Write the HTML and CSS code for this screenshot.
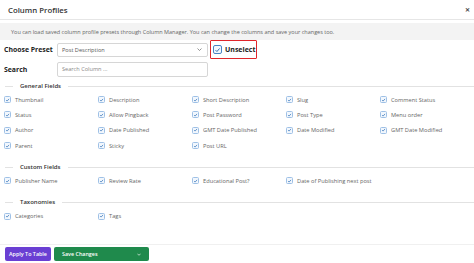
FILE: index.html
```html
<!DOCTYPE html>
<html>
<head>
<meta charset="utf-8">
<link rel="stylesheet" href="styles.css">
</head>
<body>
<div class="modal">
  <div class="header">
    <span class="title">Column Profiles</span>
    <span class="close">✕</span>
  </div>
  <div class="info">You can load saved column profile presets through Column Manager. You can change the columns and save your changes too.</div>
  <div class="row preset-row">
    <span class="label">Choose Preset</span>
    <div class="select"><span>Post Description</span><svg class="chev" viewBox="0 0 10 6" width="5" height="3"><path d="M1 1l4 4 4-4" fill="none" stroke="#666" stroke-width="1.4"/></svg></div>
    <div class="unselect"><span class="cb big"><svg viewBox="0 0 10 10"><path d="M2.2 5.2l2 2 3.8-4.4" fill="none" stroke="#2b6cb0" stroke-width="1.4"/></svg></span><b>Unselect</b></div>
  </div>
  <div class="row search-row">
    <span class="label">Search</span>
    <div class="input">Search Column ...</div>
  </div>

  <div class="divider general-div"><span>General Fields</span></div>
  <div class="grid">
    <label class="item"><span class="cb"><svg viewBox="0 0 10 10"><path d="M2.2 5.2l2 2 3.8-4.4"/></svg></span>Thumbnail</label>
    <label class="item"><span class="cb"><svg viewBox="0 0 10 10"><path d="M2.2 5.2l2 2 3.8-4.4"/></svg></span>Description</label>
    <label class="item"><span class="cb"><svg viewBox="0 0 10 10"><path d="M2.2 5.2l2 2 3.8-4.4"/></svg></span>Short Description</label>
    <label class="item"><span class="cb"><svg viewBox="0 0 10 10"><path d="M2.2 5.2l2 2 3.8-4.4"/></svg></span>Slug</label>
    <label class="item"><span class="cb"><svg viewBox="0 0 10 10"><path d="M2.2 5.2l2 2 3.8-4.4"/></svg></span>Comment Status</label>
    <label class="item"><span class="cb"><svg viewBox="0 0 10 10"><path d="M2.2 5.2l2 2 3.8-4.4"/></svg></span>Status</label>
    <label class="item"><span class="cb"><svg viewBox="0 0 10 10"><path d="M2.2 5.2l2 2 3.8-4.4"/></svg></span>Allow Pingback</label>
    <label class="item"><span class="cb"><svg viewBox="0 0 10 10"><path d="M2.2 5.2l2 2 3.8-4.4"/></svg></span>Post Password</label>
    <label class="item"><span class="cb"><svg viewBox="0 0 10 10"><path d="M2.2 5.2l2 2 3.8-4.4"/></svg></span>Post Type</label>
    <label class="item"><span class="cb"><svg viewBox="0 0 10 10"><path d="M2.2 5.2l2 2 3.8-4.4"/></svg></span>Menu order</label>
    <label class="item"><span class="cb"><svg viewBox="0 0 10 10"><path d="M2.2 5.2l2 2 3.8-4.4"/></svg></span>Author</label>
    <label class="item"><span class="cb"><svg viewBox="0 0 10 10"><path d="M2.2 5.2l2 2 3.8-4.4"/></svg></span>Date Published</label>
    <label class="item"><span class="cb"><svg viewBox="0 0 10 10"><path d="M2.2 5.2l2 2 3.8-4.4"/></svg></span>GMT Date Published</label>
    <label class="item"><span class="cb"><svg viewBox="0 0 10 10"><path d="M2.2 5.2l2 2 3.8-4.4"/></svg></span>Date Modified</label>
    <label class="item"><span class="cb"><svg viewBox="0 0 10 10"><path d="M2.2 5.2l2 2 3.8-4.4"/></svg></span>GMT Date Modified</label>
    <label class="item"><span class="cb"><svg viewBox="0 0 10 10"><path d="M2.2 5.2l2 2 3.8-4.4"/></svg></span>Parent</label>
    <label class="item"><span class="cb"><svg viewBox="0 0 10 10"><path d="M2.2 5.2l2 2 3.8-4.4"/></svg></span>Sticky</label>
    <label class="item"><span class="cb"><svg viewBox="0 0 10 10"><path d="M2.2 5.2l2 2 3.8-4.4"/></svg></span>Post URL</label>
  </div>

  <div class="divider"><span>Custom Fields</span></div>
  <div class="grid">
    <label class="item"><span class="cb"><svg viewBox="0 0 10 10"><path d="M2.2 5.2l2 2 3.8-4.4"/></svg></span>Publisher Name</label>
    <label class="item"><span class="cb"><svg viewBox="0 0 10 10"><path d="M2.2 5.2l2 2 3.8-4.4"/></svg></span>Review Rate</label>
    <label class="item"><span class="cb"><svg viewBox="0 0 10 10"><path d="M2.2 5.2l2 2 3.8-4.4"/></svg></span>Educational Post?</label>
    <label class="item"><span class="cb"><svg viewBox="0 0 10 10"><path d="M2.2 5.2l2 2 3.8-4.4"/></svg></span>Date of Publishing next post</label>
  </div>

  <div class="divider"><span>Taxonomies</span></div>
  <div class="grid">
    <label class="item"><span class="cb"><svg viewBox="0 0 10 10"><path d="M2.2 5.2l2 2 3.8-4.4"/></svg></span>Categories</label>
    <label class="item"><span class="cb"><svg viewBox="0 0 10 10"><path d="M2.2 5.2l2 2 3.8-4.4"/></svg></span>Tags</label>
  </div>

  <div class="footer">
    <button class="btn apply">Apply To Table</button>
    <button class="btn save"><span>Save Changes</span><svg viewBox="0 0 10 6" width="4" height="3"><path d="M1 1l4 4 4-4" fill="none" stroke="#fff" stroke-width="1.6"/></svg></button>
  </div>
</div>
</body>
</html>
```
FILE: styles.css
```css
* { box-sizing: border-box; }
html, body { margin: 0; padding: 0; background: #fff; }
body {
  font-family: "Open Sans", "Noto Sans", sans-serif;
  color: #555;
  width: 474px;
  height: 263px;
  overflow: hidden;
}
.modal { display: flex; flex-direction: column; }
.header {
  height: 20px;
  display: flex;
  align-items: center;
  justify-content: space-between;
  padding: 0 4px 0 8px;
  border-bottom: 1px solid #e6e6e6;
}
.title { font-size: 7.8px; font-weight: 600; color: #333; }
.close { font-size: 6px; color: #444; font-weight: 700; }
.info {
  margin-top: 3px;
  height: 17px;
  background: #f3f3f3;
  padding: 0 11px;
  font-size: 5.5px;
  color: #666;
  display: flex;
  align-items: center;
  white-space: nowrap;
}
.row { display: flex; align-items: center; padding-left: 4px; }
.label { width: 53px; font-size: 6.9px; font-weight: 700; color: #222; }
.preset-row { height: 19px; }
.select, .input {
  width: 151px;
  height: 14px;
  border: 1px solid #d6d6d6;
  border-radius: 2px;
  padding: 0 5px 0 4px;
  font-size: 5.6px;
  display: flex;
  align-items: center;
  justify-content: space-between;
  color: #555;
}
.input { color: #888; height: 15px; }
.chev { display: block; }
.unselect {
  margin-left: 2px;
  height: 19px;
  width: 47px;
  border: 1.5px solid #e0262b;
  border-radius: 1px;
  display: flex;
  align-items: center;
  padding-left: 2px;
  gap: 3px;
}
.unselect b { font-size: 7px; color: #222; font-weight: 700; }
.search-row { height: 18px; margin-top: 1px; }
.divider {
  display: flex;
  align-items: center;
  margin-top: 10px;
  height: 8px;
  font-size: 6px;
  font-weight: 600;
  color: #333;
  padding-left: 5px;
}
.divider.general-div { margin-top: 4px; }
.divider::before { content: ""; width: 8px; height: 1px; background: #e2e2e2; }
.divider span { padding: 0 7px; }
.divider::after { content: ""; flex: 1; height: 1px; background: #e2e2e2; }
.grid {
  display: grid;
  grid-template-columns: repeat(5, 94px);
  grid-auto-rows: 15.3px;
  padding-left: 4px;
  margin-top: 2px;
}
.item {
  display: flex;
  align-items: center;
  gap: 4px;
  font-size: 5.7px;
  color: #666;
  white-space: nowrap;
}
.cb {
  width: 7px;
  height: 7px;
  border: 0.8px solid #9fc1e6;
  border-radius: 1.5px;
  background: #f2f7fd;
  display: inline-flex;
  align-items: center;
  justify-content: center;
  flex: none;
}
.cb svg { width: 6px; height: 6px; display: block; }
.cb svg path { fill: none; stroke: #2d6db3; stroke-width: 1.4; }
.cb.big { width: 9px; height: 9px; border-color: #4a84c4; border-radius: 2px; }
.cb.big svg { width: 8px; height: 8px; }
.footer {
  margin-top: 20px;
  border-top: 1px solid #f0f0f0;
  padding: 2.5px 0 0 5px;
  display: flex;
  gap: 3px;
}
.btn {
  border: none;
  border-radius: 2px;
  height: 14px;
  color: #fff;
  font-family: "Open Sans", "Noto Sans", sans-serif;
  font-size: 5.4px;
  font-weight: 600;
  padding: 0;
  display: flex;
  align-items: center;
}
.apply { background: #6a3fd3; width: 46px; justify-content: center; }
.save { background: #1f8a4c; width: 95px; justify-content: space-between; padding: 0 8px; }
.save svg { display: block; }
```
